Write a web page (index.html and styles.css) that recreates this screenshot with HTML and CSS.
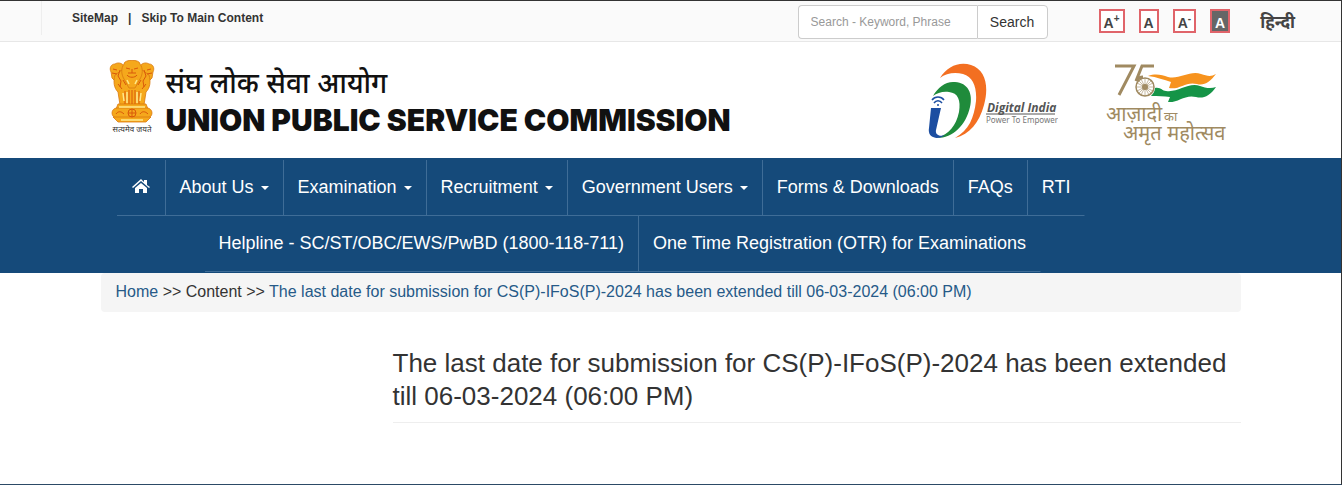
FILE: index.html
```
<!DOCTYPE html>
<html lang="en">
<head>
    <meta charset="UTF-8">
    <meta name="viewport" content="width=device-width, initial-scale=1.0">
    <title>Union Public Service Commission</title>
    <link rel="stylesheet" href="styles.css">
</head>
<body>
    <div class="topbar">
        <div class="skip-links">
            <a href="#sitemap">SiteMap</a>
            <span>|</span>
            <a href="#content">Skip To Main Content</a>
        </div>
        <form class="search" onsubmit="return false">
            <input type="text" aria-label="Search" placeholder="Search - Keyword, Phrase">
            <button type="submit">Search</button>
        </form>
        <div class="text-size">
            <button type="button" aria-label="Increase text size">A<sup>+</sup></button>
            <button type="button" aria-label="Normal text size">A</button>
            <button type="button" aria-label="Decrease text size">A<sup>-</sup></button>
            <button type="button" class="contrast" aria-label="High contrast">A</button>
        </div>
        <a class="lang" href="#hindi" lang="hi">हिन्दी</a>
    </div>

    <header class="container header">
        <svg class="emblem" viewBox="0 0 46 76" width="46" height="76" role="img" aria-label="National emblem">
            <g fill="#f5a81c" stroke="#d9780f" stroke-width="0.8">
                <!-- side lions -->
                <path d="M2 12C0 8 2 4 6 4c3-2 7-1 9 2l1 12-9 4-4-4z"/>
                <path d="M44 12c2-4 0-8-4-8-3-2-7-1-9 2l-1 12 9 4 4-4z"/>
                <path d="M6 15c-2 7-1 13 3 17l2 13h24l2-13c4-4 5-10 3-17l-7-5H13z"/>
                <!-- front lion -->
                <path d="M15 4c0-5 16-5 16 0 3 4 3 10 0 15l-5 9h-6l-5-9c-3-5-3-11 0-15z"/>
                <!-- base -->
                <path d="M9 44h28l2 5H7z"/>
                <rect x="3" y="48" width="40" height="10" rx="5"/>
                <path d="M4 57h38l-5 5H9z"/>
            </g>
            <g fill="none" stroke="#d9580a" stroke-width="1">
                <path d="M17 8l4 1m8-1l-4 1M23 9v4M18 15c2 3 8 3 10 0M19 13h8"/>
                <path d="M4 9l4 1m-5 3l5 1M42 9l-4 1m5 3l-5 1"/>
                <path d="M11 10l-2 6 3 5-1 6M35 10l2 6-3 5 1 6M14 20l3 5M32 20l-3 5M9 24l4 5M37 24l-4 5"/>
                <path d="M16 31v13M20 30v14M23 30v14M26 30v14M30 31v13"/>
                <circle cx="23" cy="53" r="4"/>
                <path d="M19 53h8M23 49v8M7 54c2-3 5-3 8 0M31 54c2-3 5-3 8 0"/>
            </g>
            <g fill="none" stroke="#ffe98c" stroke-width="1.5">
                <path d="M18 32v11M28 32v11M18 20l2 4M28 20l-2 4M14 33l1 8M32 33l-1 8M10 47h26M12 60h22"/>
            </g>
            <text x="23" y="72" font-size="8" text-anchor="middle" fill="#333">सत्यमेव जयते</text>
        </svg>
        <div class="brand">
            <p lang="hi">संघ लोक सेवा आयोग</p>
            <h1>UNION PUBLIC SERVICE COMMISSION</h1>
        </div>
        <svg class="digital-india" viewBox="0 0 130 78" width="130" height="78" role="img" aria-label="Digital India, Power To Empower">
            <path fill="#f36f21" d="M12 15C19 3 32-2 43 2c15 5 18 22 13 40-5 18-14 29-29 33 14-8 19-20 21-37 1-14-3-24-13-27-8-2-17-1-23 4z"/>
            <path fill="#1f8b3b" d="M5 33c5-9 13-15 22-14 13 1 18 11 15 25-4 18-17 31-33 31 12-4 19-12 22-26 2-12-1-19-10-20-6-1-12 1-16 4z"/>
            <path fill="#1c4ea1" d="M3 45h10L8 67c-1 5 4 7 9 5 -6 5-18 4-16-7z"/>
            <g fill="none" stroke="#1c4ea1" stroke-width="1.5">
                <path d="M4 37c3-4 9-4 12 0M6 40c2-3 6-3 8 0"/>
            </g>
            <circle cx="10" cy="42" r="1" fill="#1c4ea1"/>
            <text class="di-name" x="59" y="49">Digital India</text>
            <path d="M58 51h69" stroke="#555"/>
            <text class="di-tag" x="58" y="60">Power To Empower</text>
        </svg>
        <svg class="amrit" viewBox="0 0 126 84" width="126" height="84" role="img" aria-label="आज़ादी का अमृत महोत्सव">
            <g fill="none" stroke="#a08a61" stroke-width="3">
                <path d="M10 3h19L14 32"/>
                <path d="M49 3H37l-6 15c2-3 4-4 7-4"/>
                <circle cx="40" cy="24" r="9" stroke-width="1.5"/>
                <path d="M40 15v18M31 24h18M34 18l12 12M46 18L34 30M36 16l8 16M44 16l-8 16M32 20l16 8M48 20l-16 8" stroke-width="0.6"/>
                <circle cx="40" cy="24" r="2" stroke-width="2"/>
            </g>
            <path fill="#f7931e" d="M43 13c8-3 14-1 20 1 11 3 22-7 33-3 6 2 10 3 15 0-6 8-12 12-19 10-11-3-17 6-28 4l2-6c-7-2-14-5-23-6z"/>
            <path fill="#159447" d="M50 25c6-1 7 3 11 3 12 2 22-9 34-5 5 2 11 3 16 1-6 9-13 12-20 10-11-3-18 6-28 5l2-5c-6-1-12-1-19-1 2-2 4-5 4-8z"/>
            <text class="amrit-text" x="1" y="58" font-size="20">आज़ादी</text>
            <text class="amrit-text" x="59" y="58" font-size="13">का</text>
            <text class="amrit-text" x="18" y="77" font-size="20">अमृत महोत्सव</text>
        </svg>
    </header>

    <nav class="navbar">
        <div class="container">
            <ul class="menu">
                <li>
                    <a href="#home" aria-label="Home">
                        <svg viewBox="0 0 18 16" width="18" height="16" fill="#fff">
                            <path d="M9 5l6 5v5h-4v-4H7v4H3v-5z"/>
                            <path d="M0 9l9-8 3 3V2h3v5l3 2-1 1-8-7-8 7z"/>
                        </svg>
                    </a>
                </li>
                <li><a href="#about">About Us <b class="caret"></b></a></li>
                <li><a href="#examination">Examination <b class="caret"></b></a></li>
                <li><a href="#recruitment">Recruitment <b class="caret"></b></a></li>
                <li><a href="#government">Government Users <b class="caret"></b></a></li>
                <li><a href="#forms">Forms &amp; Downloads</a></li>
                <li><a href="#faqs">FAQs</a></li>
                <li><a href="#rti">RTI</a></li>
            </ul>
            <ul class="menu menu-second">
                <li><a href="#helpline">Helpline - SC/ST/OBC/EWS/PwBD (1800-118-711)</a></li>
                <li><a href="#otr">One Time Registration (OTR) for Examinations</a></li>
            </ul>
        </div>
    </nav>

    <main class="container" id="content">
        <div class="breadcrumb">
            <a href="#home">Home</a> &gt;&gt; Content &gt;&gt;
            <a href="#content">The last date for submission for CS(P)-IFoS(P)-2024 has been extended till 06-03-2024 (06:00 PM)</a>
        </div>
        <div class="content">
            <h2>The last date for submission for CS(P)-IFoS(P)-2024 has been extended till 06-03-2024 (06:00 PM)</h2>
        </div>
    </main>
</body>
</html>
```
FILE: styles.css
```
* {
    box-sizing: border-box;
}
body {
    font-family: "Liberation Sans", Arial, "Noto Sans", sans-serif;
    font-size: 16px;
    color: #333;
    background-color: #fff;
    margin: 0;
    min-height: 100vh;
    border-top: 1px solid #333;
    border-right: 1px solid #333;
    border-bottom: 1px solid #2c4a66;
}
a {
    color: #265a88;
    text-decoration: none;
}
.container {
    max-width: 1140px;
    margin: 0 auto;
}

/* top bar */
.topbar {
    display: flex;
    height: 41px;
    padding: 0 46px 0 41px;
    background-color: #fafafa;
    border-bottom: 1px solid #e7e7e7;
}
.skip-links {
    display: flex;
    gap: 10px;
    height: 34px;
    padding-left: 30px;
    border-left: 1px solid #eee;
    font-size: 12px;
    font-weight: bold;
    line-height: 34px;
    margin-right: auto;
}
.skip-links a {
    color: #333;
}
.search {
    display: flex;
    width: 250px;
    height: 34px;
    margin-top: 4px;
}
.search input {
    flex: 1;
    min-width: 0;
    padding: 0 12px;
    border: 1px solid #ccc;
    border-right: 0;
    border-radius: 4px 0 0 4px;
    font: 12px "Liberation Sans", Arial, sans-serif;
}
.search input::placeholder {
    color: #999;
}
.search button {
    width: 71px;
    padding: 0;
    border: 1px solid #ccc;
    border-radius: 0 4px 4px 0;
    background-color: #fff;
    color: #333;
    font: 14px "Liberation Sans", Arial, sans-serif;
}
.text-size {
    display: flex;
    gap: 14px;
    margin: 8px 30px 0 51px;
}
.text-size button {
    height: 24px;
    padding: 3px 3px 0;
    border: 2px solid #e0646a;
    background-color: #fff;
    color: #444;
    font: bold 14px "Liberation Sans", Arial, sans-serif;
}
.text-size sup {
    font-size: 10px;
    line-height: 0;
}
.text-size .contrast {
    background-color: #666;
    color: #fff;
}
.lang {
    color: #444;
    font-size: 17px;
    font-weight: bold;
    line-height: 44px;
}

/* logo row */
.header {
    display: flex;
    align-items: flex-start;
    height: 116px;
    padding: 18px 10px 0 8px;
}
.brand {
    margin: 6px auto 0 11px;
    color: #111;
}
.brand p {
    margin: 0;
    font-size: 28px;
    font-weight: 500;
    line-height: 36px;
}
.brand h1 {
    margin: 0;
    font-family: Inter, "Liberation Sans", sans-serif;
    font-size: 30px;
    font-weight: 900;
    line-height: 36px;
}
.digital-india {
    margin: 3px 47px 0 0;
}
.di-name {
    font: italic bold 12px "Open Sans", sans-serif;
    fill: #555;
}
.di-tag {
    font: 8px "Noto Sans", sans-serif;
    fill: #777;
}
.amrit {
    margin-top: 3px;
}
.amrit-text {
    fill: #a08a61;
}

/* navigation */
.navbar {
    height: 115px;
    padding-top: 2px;
    background-color: #154a7a;
}
.menu {
    display: flex;
    margin: 0 0 0 16px;
    padding: 0;
    list-style: none;
}
.menu-second {
    margin-left: 104px;
}
.menu li {
    height: 56px;
    border-right: 1px solid #3f6d97;
    border-bottom: 1px solid #3f6d97;
}
.menu li:last-child {
    border-right-color: transparent;
}
.menu a {
    display: block;
    padding: 0 14px;
    color: #fff;
    font-size: 18px;
    line-height: 54px;
    white-space: nowrap;
}
.menu svg {
    margin: 0 1px;
    vertical-align: -1px;
}
.caret {
    display: inline-block;
    margin-left: 2px;
    border-top: 4px solid #fff;
    border-left: 4px solid transparent;
    border-right: 4px solid transparent;
    vertical-align: middle;
}

/* page content */
.breadcrumb {
    padding: 8px 15px 9px;
    background-color: #f5f5f5;
    border-radius: 4px;
    line-height: 22px;
}
.content {
    margin: 35px 0 0 292px;
    border-bottom: 1px solid #eee;
}
.content h2 {
    margin: 0;
    padding-bottom: 9px;
    font-size: 26px;
    font-weight: normal;
    line-height: 33px;
}
```
